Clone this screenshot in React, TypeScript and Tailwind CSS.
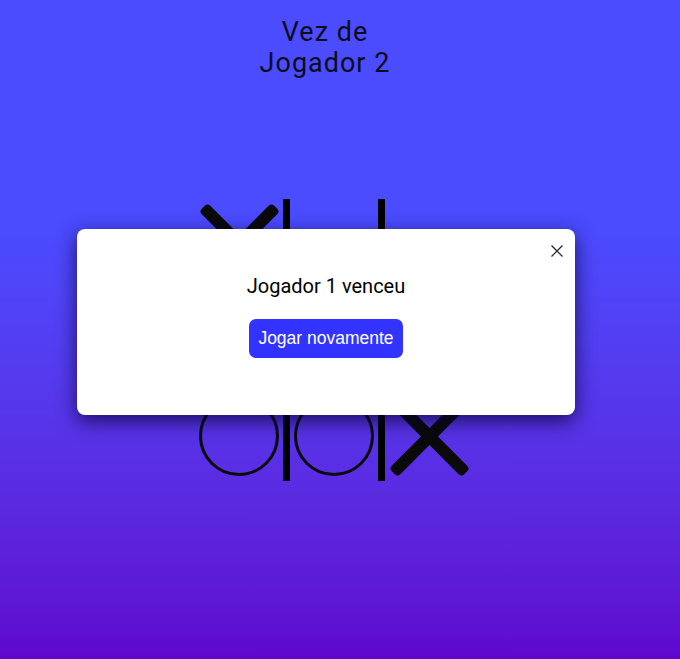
import React from "react";

type Cell = "X" | "O" | "";

const board: Cell[] = ["X", "", "", "", "X", "", "O", "O", "X"];

function XMark() {
  return (
    <svg width="81" height="81" viewBox="0 0 81 81">
      <rect x="-10.75" y="34.5" width="102.5" height="12" rx="4" fill="#0a0a0a" transform="rotate(45 40.5 40.5)" />
      <rect x="-10.75" y="34.5" width="102.5" height="12" rx="4" fill="#0a0a0a" transform="rotate(-45 40.5 40.5)" />
    </svg>
  );
}

function OMark() {
  return (
    <svg width="80" height="80" viewBox="0 0 80 80">
      <circle cx="40" cy="40" r="38.5" fill="none" stroke="#0a0a0a" strokeWidth="3" />
    </svg>
  );
}

const cellClasses = [
  "w-[95px] h-[96px] border-r-[7px] border-b-[7px]",
  "w-[95px] h-[96px] border-r-[7px] border-b-[7px]",
  "w-[88px] h-[96px] border-b-[7px]",
  "w-[95px] h-[96px] border-r-[7px] border-b-[7px]",
  "w-[95px] h-[96px] border-r-[7px] border-b-[7px]",
  "w-[88px] h-[96px] border-b-[7px]",
  "w-[95px] h-[90px] border-r-[7px]",
  "w-[95px] h-[90px] border-r-[7px]",
  "w-[88px] h-[90px]",
];

export default function App() {
  return (
    <div
      className="relative w-full min-h-[659px] bg-gradient-to-b from-[#4b4bff] from-35% to-[#5f06cf] overflow-hidden"
      style={{ fontFamily: "Roboto, 'Liberation Sans', sans-serif" }}
    >
      <div className="w-[650px] pt-[17px] flex flex-col items-center">
        <h1 className="text-[27px] leading-[31px] tracking-[1px] text-[#0d0d1a] text-center font-normal">
          Vez de
          <br />
          Jogador 2
        </h1>
      </div>

      <div className="ml-[195px] mt-[120px] grid grid-cols-[95px_95px_88px] w-[278px]">
        {board.map((c, i) => (
          <div key={i} className={`${cellClasses[i]} border-black flex items-center justify-center box-border`}>
            {c === "X" ? <XMark /> : c === "O" ? <OMark /> : null}
          </div>
        ))}
      </div>

      <div className="absolute left-[77px] top-[229px] w-[498px] h-[186px] bg-white rounded-[8px] shadow-[0_6px_20px_rgba(10,0,50,0.75)]">
        <button className="absolute right-[12px] top-[16px] w-[12px] h-[12px] flex items-center justify-center">
          <svg width="12" height="12" viewBox="0 0 12 12">
            <path d="M0.5 0.5 L11.5 11.5 M11.5 0.5 L0.5 11.5" stroke="#222" strokeWidth="1.2" />
          </svg>
        </button>
        <div className="flex flex-col items-center pt-[44px]">
          <p className="text-[20px] leading-[26px] text-black">Jogador 1 venceu</p>
          <button
            className="mt-[20px] h-[39px] px-[9px] rounded-[7px] bg-[#3333ff] text-white text-[17.5px]"
            style={{ fontFamily: "'Liberation Sans', Arial, sans-serif" }}
          >
            Jogar novamente
          </button>
        </div>
      </div>
    </div>
  );
}
